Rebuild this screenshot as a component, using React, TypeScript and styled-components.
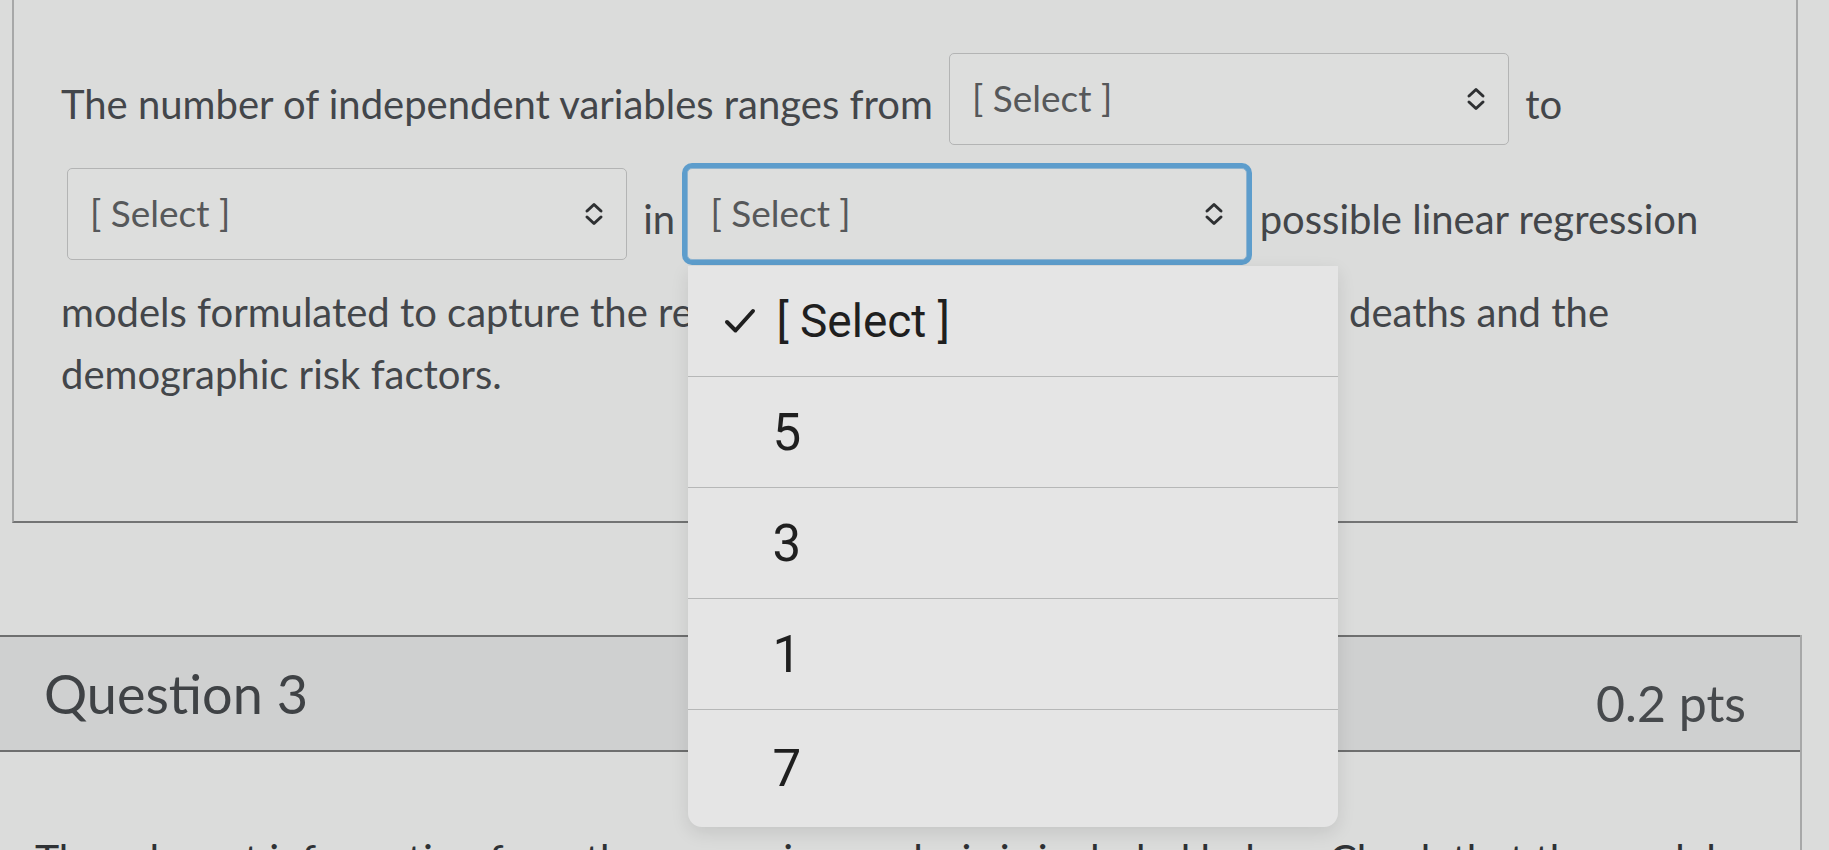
import React from "react";
import styled, { createGlobalStyle } from "styled-components";

const GlobalStyle = createGlobalStyle`
  html, body {
    margin: 0;
    padding: 0;
  }
  body {
    background: #dbdcdb;
    font-family: Lato, "Liberation Sans", sans-serif;
    color: #43464a;
    overflow: hidden;
  }
`;

const Page = styled.main`
  width: 1829px;
  height: 850px;
  overflow: hidden;
  background: #dbdcdb;
`;

const QuestionPanel = styled.section`
  box-sizing: border-box;
  margin-left: 12px;
  width: 1786px;
  padding: 51px 40px 116px 47px;
  border-left: 2px solid #a7a8a8;
  border-right: 2px solid #a7a8a8;
  border-bottom: 2px solid #737474;
`;

const Prose = styled.div`
  font-size: 40px;
  line-height: 62px;
  color: #43464a;
`;

const SelectBox = styled.div<{ $focused?: boolean }>`
  position: relative;
  box-sizing: border-box;
  display: inline-flex;
  align-items: center;
  justify-content: space-between;
  vertical-align: middle;
  width: 560px;
  height: 92px;
  margin: ${(p) => (p.$focused ? "2px 2px 21px" : "2px 6px 21px")};
  padding: 0 22px 0 22px;
  border: 1px solid #b3b4b4;
  border-radius: 5px;
  background: #dddedd;
  font-size: 37px;
  line-height: 1;
  color: #56585a;
  box-shadow: ${(p) => (p.$focused ? "0 0 0 5px #5d9dcc" : "none")};
  border-color: ${(p) => (p.$focused ? "#8fb4d0" : "#b3b4b4")};
`;

const SelectLabel = styled.span`
  font-family: Lato, "Liberation Sans", sans-serif;
  padding-bottom: 4px;
`;

const Menu = styled.div`
  position: absolute;
  z-index: 10;
  top: calc(100% + 7px);
  left: 0;
  width: 650px;
  background: #e5e5e5;
  border-radius: 0 0 14px 14px;
  box-shadow: 0 6px 18px rgba(0, 0, 0, 0.1);
  font-family: Roboto, "Liberation Sans", sans-serif;
  line-height: 1;
  color: #1f1f1f;
  overflow: hidden;
`;

const MenuItem = styled.div<{ $last?: boolean }>`
  box-sizing: border-box;
  display: flex;
  align-items: center;
  height: ${(p) => (p.$last ? 117 : 111)}px;
  padding-left: 36px;
  border-bottom: ${(p) => (p.$last ? "none" : "1px solid #b6b7b7")};
`;

const CheckSlot = styled.span`
  display: inline-flex;
  align-items: center;
  width: 52px;
`;

const OptionText = styled.span<{ $digit?: boolean }>`
  font-size: ${(p) => (p.$digit ? 51 : 46)}px;
  margin-left: ${(p) => (p.$digit ? -4 : 0)}px;
`;

const QuestionBlock = styled.section`
  box-sizing: border-box;
  margin-top: 112px;
  width: 1802px;
  border-right: 2px solid #a7a8a8;
`;

const QuestionHeader = styled.header`
  box-sizing: border-box;
  display: flex;
  align-items: center;
  justify-content: space-between;
  height: 117px;
  padding: 0 54px 0 44px;
  background: #cfd0d0;
  border-top: 2px solid #6e6f6f;
  border-bottom: 2px solid #6e6f6f;
`;

const QuestionTitle = styled.h2`
  margin: 0;
  font-weight: 400;
  font-size: 54px;
  color: #3f4245;
`;

const Points = styled.span`
  font-size: 50px;
  color: #46494c;
  padding-top: 18px;
`;

const QuestionBody = styled.div`
  padding: 76px 0 0 35px;
  font-size: 41px;
  line-height: 62px;
  color: #2f3235;
  white-space: nowrap;
`;

function UpDown() {
  return (
    <svg width="20" height="28" viewBox="0 0 20 28" fill="none">
      <path
        d="M3 11 L10 4.5 L17 11 M3 17 L10 23.5 L17 17"
        stroke="#2e3032"
        strokeWidth="3"
        strokeLinecap="round"
        strokeLinejoin="round"
      />
    </svg>
  );
}

function Tick() {
  return (
    <svg width="32" height="28" viewBox="0 0 32 28" fill="none">
      <path
        d="M3 15 L11.5 23.5 L29 4"
        stroke="#1f1f1f"
        strokeWidth="4"
        strokeLinecap="round"
        strokeLinejoin="round"
      />
    </svg>
  );
}

const options = ["[ Select ]", "5", "3", "1", "7"];

function Select({ open }: { open?: boolean }) {
  return (
    <SelectBox $focused={open}>
      <SelectLabel>[ Select ]</SelectLabel>
      <UpDown />
      {open && (
        <Menu>
          {options.map((o, i) => (
            <MenuItem key={o} $last={i === options.length - 1}>
              <CheckSlot>{i === 0 && <Tick />}</CheckSlot>
              <OptionText $digit={i > 0}>{o}</OptionText>
            </MenuItem>
          ))}
        </Menu>
      )}
    </SelectBox>
  );
}

export default function App() {
  return (
    <>
      <GlobalStyle />
      <Page>
        <QuestionPanel>
          <Prose>
            The number of independent variables ranges from <Select /> to{" "}
            <Select /> in <Select open /> possible linear regression models
            formulated to capture the relationship between COVID-19 linked
            deaths and the demographic risk factors.
          </Prose>
        </QuestionPanel>
        <QuestionBlock>
          <QuestionHeader>
            <QuestionTitle>Question 3</QuestionTitle>
            <Points>0.2 pts</Points>
          </QuestionHeader>
          <QuestionBody>
            The relevant information from the regression analysis is included
            below. Check that the model
          </QuestionBody>
        </QuestionBlock>
      </Page>
    </>
  );
}
